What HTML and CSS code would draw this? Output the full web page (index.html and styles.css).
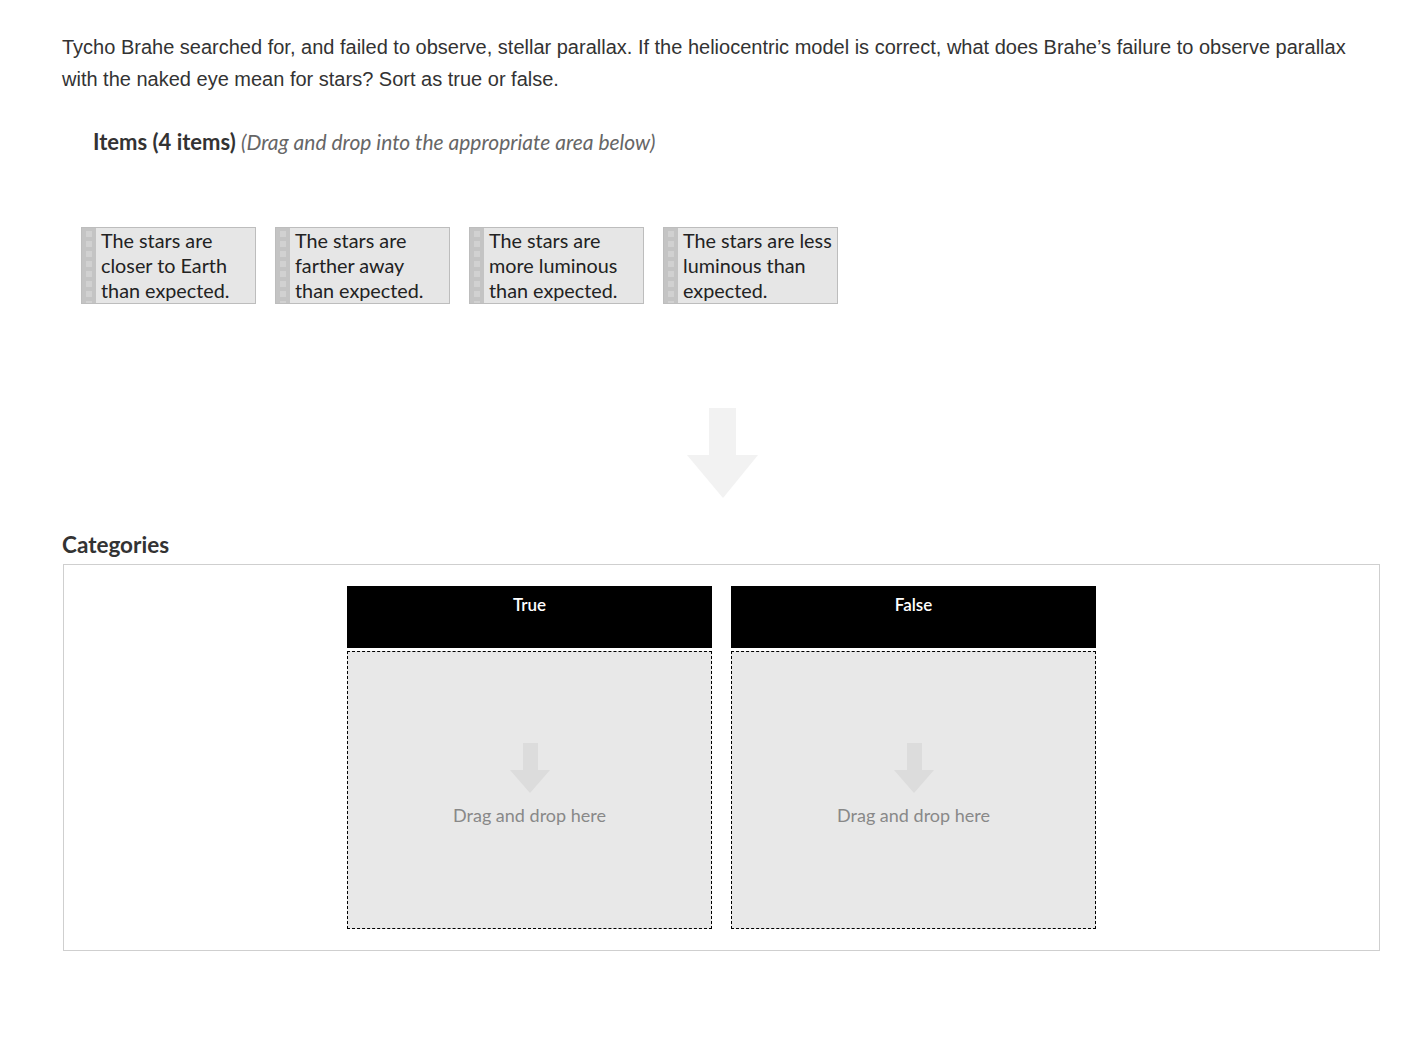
FILE: index.html
```html
<!DOCTYPE html>
<html lang="en">
<head>
  <meta charset="UTF-8">
  <title>Sort as true or false</title>
  <link rel="stylesheet" href="styles.css">
</head>
<body>
  <div class="page">
    <p class="question">Tycho Brahe searched for, and failed to observe, stellar parallax. If the heliocentric model is correct, what does Brahe’s failure to observe parallax with the naked eye mean for stars? Sort as true or false.</p>

    <h2 class="items-title">Items (4 items) <span class="items-hint">(Drag and drop into the appropriate area below)</span></h2>

    <div class="items-list">
      <div class="item-card">
        <span class="item-handle"></span>
        <span class="item-text">The stars are closer to Earth than expected.</span>
      </div>
      <div class="item-card">
        <span class="item-handle"></span>
        <span class="item-text">The stars are farther away than expected.</span>
      </div>
      <div class="item-card">
        <span class="item-handle"></span>
        <span class="item-text">The stars are more luminous than expected.</span>
      </div>
      <div class="item-card">
        <span class="item-handle"></span>
        <span class="item-text">The stars are less luminous than expected.</span>
      </div>
    </div>

    <div class="big-arrow">
      <svg width="72" height="90" viewBox="0 0 72 90"><path d="M22 0H49V47H71L36 90L0 47H22Z" fill="#f2f2f2"/></svg>
    </div>

    <h2 class="categories-title">Categories</h2>
    <div class="categories-box">
      <div class="category">
        <div class="category-header">True</div>
        <div class="drop-zone">
          <svg width="40" height="50" viewBox="0 0 40 50"><path d="M13 0H28V27H40L20 50L0 27H13Z" fill="#dcdcdc"/></svg>
          <span class="drop-label">Drag and drop here</span>
        </div>
      </div>
      <div class="category">
        <div class="category-header">False</div>
        <div class="drop-zone">
          <svg width="40" height="50" viewBox="0 0 40 50"><path d="M13 0H28V27H40L20 50L0 27H13Z" fill="#dcdcdc"/></svg>
          <span class="drop-label">Drag and drop here</span>
        </div>
      </div>
    </div>
  </div>
</body>
</html>
```

FILE: styles.css
```css
* {
  margin: 0;
  padding: 0;
  box-sizing: border-box;
}

body {
  background: #fff;
  color: #333;
  font-family: Lato, "Liberation Sans", sans-serif;
}

.page {
  width: 1318px;
  margin-left: 62px;
  padding-top: 31px;
}

.question {
  font-family: "Liberation Sans", Arial, sans-serif;
  font-size: 20px;
  line-height: 32px;
  color: #333;
}

.items-title {
  margin: 33px 0 0 31px;
  font-size: 22px;
  font-weight: 700;
  line-height: 28px;
  color: #333;
}

.items-hint {
  font-size: 21px;
  font-weight: 400;
  font-style: italic;
  color: #666;
}

.items-list {
  display: flex;
  gap: 19px;
  margin: 71px 0 0 19px;
}

.item-card {
  width: 175px;
  height: 77px;
  display: flex;
  background: #e6e6e6;
  border: 1px solid #bdbdbd;
}

.item-handle {
  width: 14px;
  flex-shrink: 0;
  background:
    repeating-linear-gradient(to bottom, #d1d1d1 0 6px, transparent 6px 10px) 4px 3px / 6px 100% no-repeat,
    #c4c4c4;
}

.item-text {
  padding: 0 2px 0 5px;
  font-size: 19.8px;
  line-height: 25px;
  color: #222;
}

.big-arrow {
  display: flex;
  justify-content: center;
  margin-top: 104px;
  padding-left: 3px;
}

.big-arrow svg {
  display: block;
}

.categories-title {
  margin-top: 33px;
  font-size: 22.5px;
  font-weight: 700;
  line-height: 28px;
  color: #333;
}

.categories-box {
  margin: 5px 0 0 1px;
  width: 1317px;
  border: 1px solid #cfcfcf;
  display: flex;
  justify-content: center;
  gap: 19px;
  padding: 21px 0 21px;
}

.category {
  width: 365px;
  display: flex;
  flex-direction: column;
}

.category-header {
  height: 62px;
  background: #000;
  color: #fff;
  text-align: center;
  font-size: 17px;
  font-weight: 600;
  padding-top: 8px;
}

.drop-zone {
  margin-top: 3px;
  height: 278px;
  background: #e8e8e8;
  border: 1px dashed #000;
  display: flex;
  flex-direction: column;
  align-items: center;
  padding-top: 91px;
}

.drop-zone svg {
  display: block;
}

.drop-label {
  margin-top: 11px;
  font-size: 18px;
  color: #888;
}
```
